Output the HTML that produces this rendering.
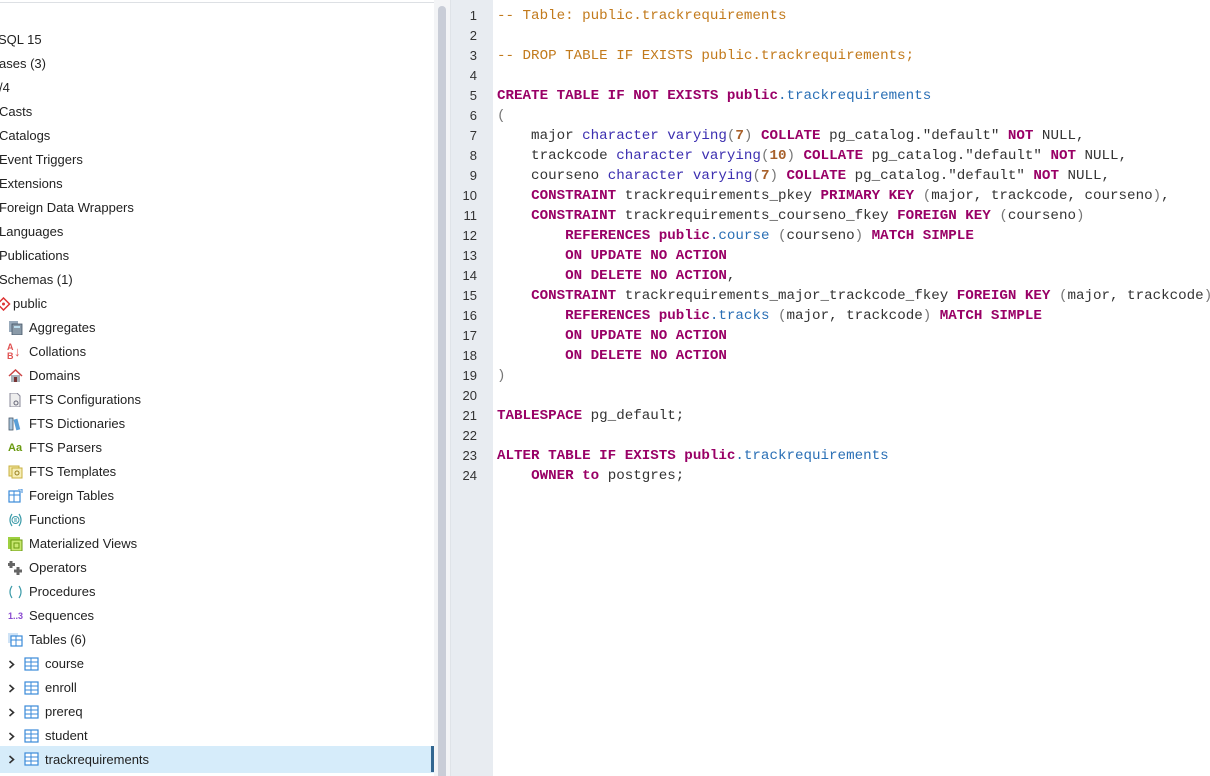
<!DOCTYPE html>
<html><head><meta charset="utf-8"><style>
*{margin:0;padding:0;box-sizing:border-box}
body{width:1210px;height:776px;overflow:hidden;background:#fff;font-family:"Liberation Sans",sans-serif;position:relative}
.topline{position:absolute;left:0;top:2px;width:440px;height:1px;background:#dde0e4}
.row{position:absolute;left:0;width:434px;height:24px;font-size:13px;color:#222;line-height:24px;white-space:nowrap}
.row span.t{position:absolute}
.ic{position:absolute;top:5px;width:15px;height:14px}
.sel{background:#d6ecfa}
.selbar{position:absolute;left:431px;top:746px;width:3px;height:26px;background:#326690}
.chev{position:absolute;top:8px;left:8px;width:7px;height:9px}
.sb{position:absolute;left:434px;top:0;width:16px;height:776px;background:#f3f4f6}
.sbt{position:absolute;left:438px;top:6px;width:8px;height:770px;background:#c9cdd7;border-radius:4px 4px 0 0}
.gut{position:absolute;left:450px;top:0;width:43px;height:776px;background:#e8ecf1;border-left:1px solid #dfe3e8}
.ln{position:absolute;left:450px;width:27px;text-align:right;font-family:"Liberation Sans",sans-serif;font-size:13px;color:#333;line-height:20px}
.code{position:absolute;left:497px;top:6px;font-family:"Liberation Mono",monospace;font-size:14.2px;line-height:20px;white-space:pre;color:#333}
.c{color:#c27a1c}.k{color:#990066;font-weight:bold}.ty{color:#3c2fb0}.n{color:#a8602a;font-weight:bold}.p{color:#777}.b{color:#2a6fb5}
</style></head><body>
<div class="topline"></div>
<div class="sb"></div><div class="sbt"></div>
<div class="gut"></div>

<div class="row" style="top:28px"><span class="t" style="left:-2px">SQL 15</span></div>
<div class="row" style="top:52px"><span class="t" style="left:-1px">ases (3)</span></div>
<div class="row" style="top:76px"><span class="t" style="left:-1px">/4</span></div>
<div class="row" style="top:100px"><span class="t" style="left:-1px">Casts</span></div>
<div class="row" style="top:124px"><span class="t" style="left:-1px">Catalogs</span></div>
<div class="row" style="top:148px"><span class="t" style="left:-1px">Event Triggers</span></div>
<div class="row" style="top:172px"><span class="t" style="left:-1px">Extensions</span></div>
<div class="row" style="top:196px"><span class="t" style="left:-1px">Foreign Data Wrappers</span></div>
<div class="row" style="top:220px"><span class="t" style="left:-1px">Languages</span></div>
<div class="row" style="top:244px"><span class="t" style="left:-1px">Publications</span></div>
<div class="row" style="top:268px"><span class="t" style="left:-1px">Schemas (1)</span></div>
<div class="row" style="top:292px"><svg class="ic" style="left:-4px" viewBox="0 0 14 14"><path d="M7 1L13 7L7 13L1 7Z" fill="none" stroke="#d33" stroke-width="1.5"/><circle cx="7" cy="7" r="1.5" fill="#d33"/></svg><span class="t" style="left:13px">public</span></div>

<div class="row" style="top:316px"><svg class="ic" style="left:8px" viewBox="0 0 15 14"><rect x="1" y="0" width="9" height="11" fill="#9ab" /><rect x="4" y="3" width="10" height="11" fill="#8a9aa8" stroke="#456" stroke-width=".8"/><rect x="6" y="5" width="6" height="2" fill="#bde"/></svg><span class="t" style="left:29px">Aggregates</span></div>
<div class="row" style="top:340px"><span class="t" style="left:7px;font-size:9px;line-height:9px;top:3px;color:#e05050;font-weight:bold">A<br>B</span><span class="t" style="left:14px;color:#e05050;font-size:13px">↓</span><span class="t" style="left:29px">Collations</span></div>
<div class="row" style="top:364px"><svg class="ic" style="left:8px" viewBox="0 0 15 14"><path d="M1 7L7.5 1L14 7" fill="none" stroke="#c44" stroke-width="1.5"/><rect x="3" y="6" width="9" height="7" fill="#a9b0b8"/><rect x="6" y="8" width="3" height="5" fill="#733"/></svg><span class="t" style="left:29px">Domains</span></div>
<div class="row" style="top:388px"><svg class="ic" style="left:8px" viewBox="0 0 15 14"><path d="M2 0H9L12 3V14H2Z" fill="#eee" stroke="#889" stroke-width="1"/><circle cx="8" cy="10" r="2" fill="none" stroke="#667" stroke-width="1"/></svg><span class="t" style="left:29px">FTS Configurations</span></div>
<div class="row" style="top:412px"><svg class="ic" style="left:8px" viewBox="0 0 15 14"><rect x="1" y="1" width="4" height="12" fill="#a8c4dc" stroke="#456" stroke-width=".8"/><rect x="7" y="2" width="4" height="11" fill="#5aa0d8" transform="rotate(-15 9 8)"/></svg><span class="t" style="left:29px">FTS Dictionaries</span></div>
<div class="row" style="top:436px"><span class="t" style="left:8px;color:#6a9a10;font-weight:bold;font-size:11px">Aa</span><span class="t" style="left:29px">FTS Parsers</span></div>
<div class="row" style="top:460px"><svg class="ic" style="left:8px" viewBox="0 0 15 14"><rect x="1" y="1" width="10" height="10" fill="#f2e6a0" stroke="#c8b040"/><rect x="4" y="3" width="10" height="10" fill="#f6eeb8" stroke="#c8b040"/><circle cx="9" cy="8" r="2" fill="none" stroke="#998020"/></svg><span class="t" style="left:29px">FTS Templates</span></div>
<div class="row" style="top:484px"><svg class="ic" style="left:8px" viewBox="0 0 15 14"><rect x="1" y="2" width="11" height="11" fill="#fff" stroke="#3a8ad8" stroke-width="1.2"/><path d="M1 6H12M6 2V13" stroke="#3a8ad8"/><path d="M10 0L14 0L14 4" fill="none" stroke="#3a8ad8"/></svg><span class="t" style="left:29px">Foreign Tables</span></div>
<div class="row" style="top:508px"><svg class="ic" style="left:8px" viewBox="0 0 15 14"><path d="M4 1Q0 7 4 13M11 1Q15 7 11 13" fill="none" stroke="#3a9aa8" stroke-width="1.2"/><circle cx="7.5" cy="7" r="3.5" fill="none" stroke="#3a9aa8"/><path d="M6 6H9M6 8H9" stroke="#3a9aa8"/></svg><span class="t" style="left:29px">Functions</span></div>
<div class="row" style="top:532px"><svg class="ic" style="left:8px" viewBox="0 0 15 14"><rect x="0" y="0" width="12" height="12" fill="#9ed040"/><rect x="3" y="3" width="11" height="11" fill="#c8e870" stroke="#6a9a10"/><rect x="6" y="6" width="5" height="5" fill="none" stroke="#6a9a10"/></svg><span class="t" style="left:29px">Materialized Views</span></div>
<div class="row" style="top:556px"><svg class="ic" style="left:8px" viewBox="0 0 15 14"><path d="M3 0V7M0 3.5H7M10 6V14M6 10H14" stroke="#666" stroke-width="3"/></svg><span class="t" style="left:29px">Operators</span></div>
<div class="row" style="top:580px"><svg class="ic" style="left:8px" viewBox="0 0 15 14"><path d="M4 1Q0 7 4 13M11 1Q15 7 11 13" fill="none" stroke="#3a9aa8" stroke-width="1.2"/></svg><span class="t" style="left:29px">Procedures</span></div>
<div class="row" style="top:604px"><span class="t" style="left:8px;color:#8a4ad0;font-size:9px;font-weight:bold">1..3</span><span class="t" style="left:29px">Sequences</span></div>
<div class="row" style="top:628px"><svg class="ic" style="left:8px" viewBox="0 0 15 14"><rect x="0" y="0" width="10" height="10" fill="#cfe3f6"/><rect x="3" y="3" width="11" height="10" fill="#fff" stroke="#3a8ad8" stroke-width="1.2"/><path d="M3 7H14M8 3V13" stroke="#3a8ad8"/></svg><span class="t" style="left:29px">Tables (6)</span></div>

<div class="row" style="top:652px"><svg class="chev" viewBox="0 0 7 9"><path d="M1.5 1L5.5 4.5L1.5 8" fill="none" stroke="#333" stroke-width="1.6"/></svg><svg class="ic" style="left:24px" viewBox="0 0 15 14"><rect x="1" y="1" width="13" height="12" fill="#fff" stroke="#3a8ad8" stroke-width="1.2"/><path d="M1 5H14M1 9H14M7 1V13" stroke="#3a8ad8"/></svg><span class="t" style="left:45px">course</span></div>
<div class="row" style="top:676px"><svg class="chev" viewBox="0 0 7 9"><path d="M1.5 1L5.5 4.5L1.5 8" fill="none" stroke="#333" stroke-width="1.6"/></svg><svg class="ic" style="left:24px" viewBox="0 0 15 14"><rect x="1" y="1" width="13" height="12" fill="#fff" stroke="#3a8ad8" stroke-width="1.2"/><path d="M1 5H14M1 9H14M7 1V13" stroke="#3a8ad8"/></svg><span class="t" style="left:45px">enroll</span></div>
<div class="row" style="top:700px"><svg class="chev" viewBox="0 0 7 9"><path d="M1.5 1L5.5 4.5L1.5 8" fill="none" stroke="#333" stroke-width="1.6"/></svg><svg class="ic" style="left:24px" viewBox="0 0 15 14"><rect x="1" y="1" width="13" height="12" fill="#fff" stroke="#3a8ad8" stroke-width="1.2"/><path d="M1 5H14M1 9H14M7 1V13" stroke="#3a8ad8"/></svg><span class="t" style="left:45px">prereq</span></div>
<div class="row" style="top:724px"><svg class="chev" viewBox="0 0 7 9"><path d="M1.5 1L5.5 4.5L1.5 8" fill="none" stroke="#333" stroke-width="1.6"/></svg><svg class="ic" style="left:24px" viewBox="0 0 15 14"><rect x="1" y="1" width="13" height="12" fill="#fff" stroke="#3a8ad8" stroke-width="1.2"/><path d="M1 5H14M1 9H14M7 1V13" stroke="#3a8ad8"/></svg><span class="t" style="left:45px">student</span></div>
<div class="row sel" style="top:746px;height:27px;line-height:27px"><svg class="chev" style="top:9px" viewBox="0 0 7 9"><path d="M1.5 1L5.5 4.5L1.5 8" fill="none" stroke="#333" stroke-width="1.6"/></svg><svg class="ic" style="left:24px;top:6px" viewBox="0 0 15 14"><rect x="1" y="1" width="13" height="12" fill="#fff" stroke="#3a8ad8" stroke-width="1.2"/><path d="M1 5H14M1 9H14M7 1V13" stroke="#3a8ad8"/></svg><span class="t" style="left:45px">trackrequirements</span></div>
<div class="selbar"></div>

<div class="ln" style="top:6px">1<br>2<br>3<br>4<br>5<br>6<br>7<br>8<br>9<br>10<br>11<br>12<br>13<br>14<br>15<br>16<br>17<br>18<br>19<br>20<br>21<br>22<br>23<br>24</div>

<div class="code"><span class="c">-- Table: public.trackrequirements</span>

<span class="c">-- DROP TABLE IF EXISTS public.trackrequirements;</span>

<span class="k">CREATE TABLE IF NOT EXISTS public</span><span class="b">.trackrequirements</span>
<span class="p">(</span>
    major <span class="ty">character varying</span><span class="p">(</span><span class="n">7</span><span class="p">)</span> <span class="k">COLLATE</span> pg_catalog."default" <span class="k">NOT</span> NULL,
    trackcode <span class="ty">character varying</span><span class="p">(</span><span class="n">10</span><span class="p">)</span> <span class="k">COLLATE</span> pg_catalog."default" <span class="k">NOT</span> NULL,
    courseno <span class="ty">character varying</span><span class="p">(</span><span class="n">7</span><span class="p">)</span> <span class="k">COLLATE</span> pg_catalog."default" <span class="k">NOT</span> NULL,
    <span class="k">CONSTRAINT</span> trackrequirements_pkey <span class="k">PRIMARY KEY</span> <span class="p">(</span>major, trackcode, courseno<span class="p">)</span>,
    <span class="k">CONSTRAINT</span> trackrequirements_courseno_fkey <span class="k">FOREIGN KEY</span> <span class="p">(</span>courseno<span class="p">)</span>
        <span class="k">REFERENCES public</span><span class="b">.course</span> <span class="p">(</span>courseno<span class="p">)</span> <span class="k">MATCH SIMPLE</span>
        <span class="k">ON UPDATE NO ACTION</span>
        <span class="k">ON DELETE NO ACTION</span>,
    <span class="k">CONSTRAINT</span> trackrequirements_major_trackcode_fkey <span class="k">FOREIGN KEY</span> <span class="p">(</span>major, trackcode<span class="p">)</span>
        <span class="k">REFERENCES public</span><span class="b">.tracks</span> <span class="p">(</span>major, trackcode<span class="p">)</span> <span class="k">MATCH SIMPLE</span>
        <span class="k">ON UPDATE NO ACTION</span>
        <span class="k">ON DELETE NO ACTION</span>
<span class="p">)</span>

<span class="k">TABLESPACE</span> pg_default;

<span class="k">ALTER TABLE IF EXISTS public</span><span class="b">.trackrequirements</span>
    <span class="k">OWNER to</span> postgres;</div>
</body></html>
